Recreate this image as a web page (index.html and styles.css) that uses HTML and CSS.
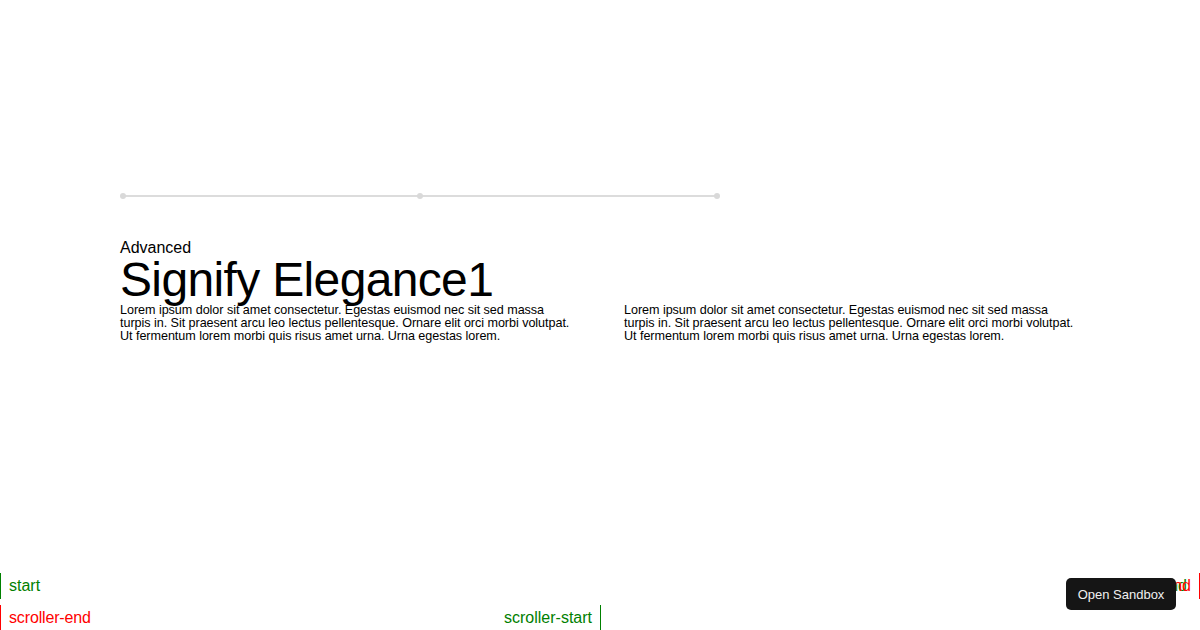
FILE: index.html
```html
<!DOCTYPE html>
<html>
<head>
<meta charset="utf-8">
<link rel="stylesheet" href="styles.css">
</head>
<body>
<main class="page">
  <section class="panel">
    <div class="track">
      <span class="dot"></span>
      <span class="dot"></span>
      <span class="dot"></span>
    </div>
    <div class="eyebrow">Advanced</div>
    <h1 class="title">Signify Elegance1</h1>
    <div class="cols">
      <p class="copy">Lorem ipsum dolor sit amet consectetur. Egestas euismod nec sit sed massa<br>turpis in. Sit praesent arcu leo lectus pellentesque. Ornare elit orci morbi volutpat.<br>Ut fermentum lorem morbi quis risus amet urna. Urna egestas lorem.</p>
      <p class="copy">Lorem ipsum dolor sit amet consectetur. Egestas euismod nec sit sed massa<br>turpis in. Sit praesent arcu leo lectus pellentesque. Ornare elit orci morbi volutpat.<br>Ut fermentum lorem morbi quis risus amet urna. Urna egestas lorem.</p>
    </div>
  </section>
</main>

<div class="marker marker-start">start</div>
<div class="marker marker-scroller-end">scroller-end</div>
<div class="marker marker-scroller-start">scroller-start</div>
<div class="marker marker-end-green">end</div>
<div class="marker marker-end">end</div>

<button class="sandbox">Open Sandbox</button>
</body>
</html>
```

FILE: styles.css
```css
html, body {
  margin: 0;
  padding: 0;
  background: #ffffff;
}

body {
  width: 1200px;
  height: 630px;
  overflow: hidden;
  font-family: "Liberation Sans", Arial, Helvetica, sans-serif;
  color: #000;
  position: relative;
}

.page {
  padding: 193px 120px 0 120px;
}

.panel {
  display: flex;
  flex-direction: column;
}

.track {
  width: 600px;
  height: 6px;
  display: flex;
  justify-content: space-between;
  align-items: center;
  position: relative;
}

.track::before {
  content: "";
  position: absolute;
  left: 3px;
  right: 3px;
  top: 2px;
  height: 2px;
  background: #dcdcdc;
}

.dot {
  width: 6px;
  height: 6px;
  border-radius: 50%;
  background: #d9d9d9;
  position: relative;
}

.eyebrow {
  margin-top: 40px;
  font-size: 16px;
  line-height: 17px;
}

.title {
  margin: 0;
  font-weight: normal;
  font-size: 48px;
  line-height: 48px;
  letter-spacing: -0.65px;
}

.cols {
  display: grid;
  grid-template-columns: 480px 480px;
  column-gap: 24px;
}

.copy {
  margin: 0;
  font-size: 12.6px;
  line-height: 13px;
  letter-spacing: -0.05px;
  white-space: nowrap;
}

.marker {
  position: absolute;
  font-size: 16px;
  line-height: normal;
  padding: 4px 8px;
  white-space: nowrap;
}

.marker-start {
  left: 0;
  top: 573px;
  color: green;
  border-left: 1px solid green;
}

.marker-scroller-end {
  left: 0;
  top: 605px;
  color: red;
  border-left: 1px solid red;
  letter-spacing: -0.15px;
}

.marker-scroller-start {
  right: 599px;
  top: 605px;
  color: green;
  border-right: 1px solid green;
}

.marker-end-green {
  right: 4px;
  top: 573px;
  color: green;
  border-right: 1px solid transparent;
}

.marker-end {
  right: 0;
  top: 573px;
  color: red;
  border-right: 1px solid red;
}

.sandbox {
  position: absolute;
  right: 24px;
  bottom: 20px;
  width: 110px;
  height: 32px;
  padding: 0;
  border: none;
  border-radius: 5px;
  background: #151515;
  color: #f0f0f0;
  font-family: "Liberation Sans", Arial, sans-serif;
  font-size: 13px;
  z-index: 2000;
}
```
